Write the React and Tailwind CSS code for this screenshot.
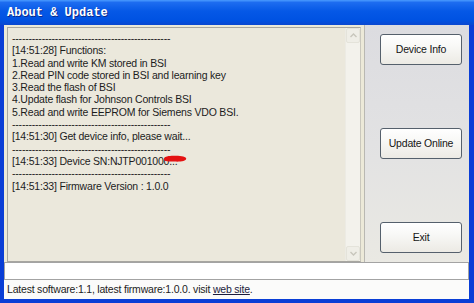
export default function App() {
  const dash = "-".repeat(48);
  const lines = [
    dash,
    "[14:51:28] Functions:",
    "1.Read and write KM stored in BSI",
    "2.Read PIN code stored in BSI and learning key",
    "3.Read the flash of BSI",
    "4.Update flash for Johnson Controls BSI",
    "5.Read and write EEPROM for Siemens VDO BSI.",
    dash,
    "[14:51:30] Get device info, please wait...",
    dash,
    "SN",
    dash,
    "[14:51:33] Firmware Version : 1.0.0",
  ];
  const Btn = ({ children }) => (
    <div className="w-[82px] h-[31px] rounded-[3px] border border-[#55606c] bg-[linear-gradient(to_bottom,#ffffff_0%,#f8f8f6_40%,#eceae4_100%)] flex items-center justify-center text-[10.5px] tracking-[-0.2px] text-[#151515]">
      {children}
    </div>
  );
  return (
    <div className="w-[474px] h-[303px] flex flex-col overflow-hidden bg-[#0a3ed6] font-['Liberation_Sans',Arial,sans-serif]">
      <div className="h-[25px] shrink-0 flex items-center pl-[7px] bg-[linear-gradient(to_bottom,#4a9bff_0%,#1d6cf0_10%,#0558e6_45%,#0052e2_80%,#0a47d0_100%)]">
        <span className="font-['Liberation_Mono',monospace] font-bold text-[12px] text-white [text-shadow:1px_1px_0_#0b2a8a] mt-[1px]">
          About &amp; Update
        </span>
      </div>
      <div className="flex-1 flex flex-col ml-[4px] mr-[5px] mb-[4px] bg-[#ece9d8]">
        <div className="h-[237px] shrink-0 flex">
          <div className="ml-[3px] mt-[2px] w-[354px] h-[235px] flex border border-[#a7a6a0] border-r-[#c9c7bd] bg-[#ebe8dc]">
            <div className="flex-1 pl-[4px] pt-[4px] text-[10.5px] tracking-[-0.2px] leading-[12.3px] text-[#1c1c1c] overflow-hidden">
              {lines.map((l, i) =>
                l === "SN" ? (
                  <div key={i} className="whitespace-nowrap">
                    [14:51:33] Device SN:NJTP00100
                    <span className="relative inline-block">
                      0...
                      <svg
                        className="absolute left-[-1px] top-[-1px]"
                        width="24"
                        height="10"
                        viewBox="0 0 24 10"
                      >
                        <path
                          d="M1 5 C1.5 2 7 1.6 13 1.8 C18.5 2 23.5 2.6 23.2 4.8 C23 7.2 18 7.8 12 7.6 C6 7.4 0.6 8 1 5 Z"
                          fill="#e41212"
                        />
                      </svg>
                    </span>
                  </div>
                ) : (
                  <div key={i} className="whitespace-nowrap">
                    {l}
                  </div>
                )
              )}
            </div>
            <div className="w-[15px] h-full flex flex-col justify-between bg-[#f3f2ec] border-l border-[#ecebe4]">
              <div className="h-[15px] flex items-center justify-center bg-[#efeee7] border border-[#e4e3da] rounded-[2px]">
                <svg width="7" height="5" viewBox="0 0 7 5">
                  <path d="M0.5 4 L3.5 1 L6.5 4" stroke="#c8c6bc" strokeWidth="1.4" fill="none" />
                </svg>
              </div>
              <div className="h-[15px] flex items-center justify-center bg-[#efeee7] border border-[#e4e3da] rounded-[2px]">
                <svg width="7" height="5" viewBox="0 0 7 5">
                  <path d="M0.5 1 L3.5 4 L6.5 1" stroke="#c8c6bc" strokeWidth="1.4" fill="none" />
                </svg>
              </div>
            </div>
          </div>
          <div className="flex-1 ml-[3px] border-l border-[#b9b8b2] bg-[linear-gradient(to_bottom,#dcdce0_0%,#e2e2e3_50%,#eae9e3_100%)] flex flex-col pl-[15px] pt-[9px] gap-[63px]">
            <Btn>Device Info</Btn>
            <Btn>Update Online</Btn>
            <Btn>Exit</Btn>
          </div>
        </div>
        <div className="h-[18px] shrink-0 bg-white border border-[#a3a3a3]" />
        <div className="h-[19px] shrink-0 bg-[#fbfbfa] flex items-center pl-[3px] text-[10.5px] tracking-[-0.2px] text-[#1c1c1c] whitespace-nowrap">
          Latest software:1.1, latest firmware:1.0.0. visit&nbsp;
          <span className="underline text-[#1c1c3c]">web site</span>.
        </div>
      </div>
    </div>
  );
}
